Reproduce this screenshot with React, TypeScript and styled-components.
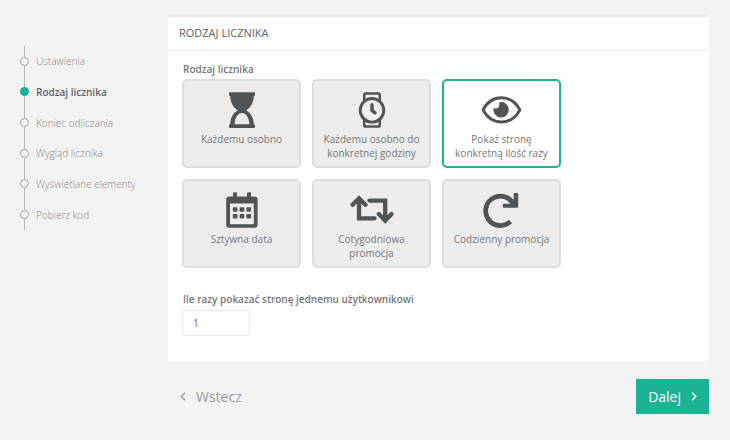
import React, { useState } from "react";
import styled, { createGlobalStyle } from "styled-components";

const GlobalStyle = createGlobalStyle`
  *, *::before, *::after { box-sizing: border-box; }
  body {
    margin: 0;
    background: #f3f3f4;
    color: #747678;
    font-family: "Open Sans", "Noto Sans", sans-serif;
    font-size: 10px;
    line-height: 14px;
  }
  button, input { font-family: inherit; }
`;

const Page = styled.div`
  display: grid;
  grid-template-columns: 168px minmax(0, 1fr);
  min-height: 100vh;
  padding: 15px 21px 0 0;
`;

const Sidebar = styled.nav`
  padding: 31px 0 0 20px;
`;

const Steps = styled.ol`
  position: relative;
  display: grid;
  grid-auto-rows: 1fr;
  height: 184px;
  margin: 0;
  padding: 0;
  list-style: none;

  &::before {
    content: "";
    position: absolute;
    top: 0;
    bottom: 0;
    left: 4px;
    width: 1px;
    background: #b8b9ba;
  }
`;

const StepItem = styled.li`
  position: relative;
  display: flex;
`;

const StepLink = styled.a<{ $active: boolean }>`
  display: flex;
  align-items: center;
  gap: 7px;
  color: ${(p) => (p.$active ? "#5f6264" : "#868889")};
  font-weight: ${(p) => (p.$active ? 600 : 300)};
  text-decoration: none;
  white-space: nowrap;
`;

const Dot = styled.span<{ $active: boolean }>`
  flex: none;
  width: 9px;
  height: 9px;
  border: ${(p) => (p.$active ? "none" : "1px solid #a3a4a5")};
  border-radius: 50%;
  background: ${(p) => (p.$active ? "#1ab394" : "#f3f3f4")};
`;

const Panel = styled.section`
  border-top: 2px solid #e7e8e9;
  background: #fff;
`;

const PanelTitle = styled.h1`
  margin: 0;
  padding: 9px 11px 10px;
  border-bottom: 1px solid #eeeff0;
  color: #5f6264;
  font-size: 11px;
  font-weight: 500;
  line-height: 14px;
`;

const PanelBody = styled.div`
  padding: 11px 14px 25px;
`;

const Group = styled.fieldset`
  min-width: 0;
  margin: 0;
  padding: 0;
  border: 0;
`;

const Legend = styled.legend`
  padding: 0 1px;
  margin-bottom: 3px;
  font-weight: 600;
`;

const Options = styled.div`
  display: grid;
  grid-template-columns: repeat(3, 119px);
  gap: 11px;
`;

const HiddenRadio = styled.input`
  position: absolute;
  inset: 0;
  margin: 0;
  opacity: 0;
  cursor: pointer;
`;

const OptionCard = styled.label`
  position: relative;
  display: flex;
  flex-direction: column;
  align-items: center;
  gap: 4px;
  height: 89px;
  padding: 11px 4px 0;
  border: 2px solid #dededf;
  border-radius: 5px;
  background: #ededed;
  text-align: center;

  &:has(input:checked) {
    border-color: #1ab394;
    background: #fff;
  }
`;

const OptionText = styled.span`
  max-width: 100px;
`;

const Glyph = styled.svg`
  flex: none;
  width: 44px;
  height: 36px;
  fill: none;
  stroke: #505457;
  stroke-linejoin: round;
  stroke-linecap: round;
`;

const Field = styled.div`
  display: flex;
  flex-direction: column;
  align-items: flex-start;
  gap: 4px;
  margin-top: 24px;
`;

const FieldLabel = styled.label`
  padding: 0 1px;
  font-weight: 600;
`;

const NumberInput = styled.input`
  width: 68px;
  height: 26px;
  padding: 0 10px;
  border: 1px solid #e9eaeb;
  border-radius: 1px;
  background: #fff;
  color: #676a6c;
  font-size: 10px;
`;

const Footer = styled.footer`
  display: flex;
  align-items: center;
  justify-content: space-between;
  margin-top: 18px;
`;

const NavButton = styled.button<{ $primary?: boolean }>`
  display: flex;
  align-items: center;
  gap: 10px;
  height: 35px;
  padding: 0 12px;
  border: 0;
  background: ${(p) => (p.$primary ? "#1ab394" : "transparent")};
  color: ${(p) => (p.$primary ? "#fff" : "#999b9c")};
  font-size: 14px;
  line-height: 20px;
  cursor: pointer;
`;

const Chevron = styled.svg`
  width: 6px;
  height: 9px;
  fill: none;
  stroke: currentColor;
  stroke-width: 1.4;
`;

const ink = "#505457";

const HourglassIcon = () => (
  <Glyph viewBox="0 0 44 36" aria-hidden="true">
    <path
      stroke="none"
      fill={ink}
      fillRule="evenodd"
      d="M9.8 0.3H34.2Q35 0.3 35 1.1V3.2Q35 4 34.2 4H33.8C33.6 10.5 31 15.3 26.3 18.2C31 21 33.6 25.8 33.8 32.2H34.2Q35 32.2 35 33V35.1Q35 35.9 34.2 35.9H9.8Q9 35.9 9 35.1V33Q9 32.2 9.8 32.2H10.2C10.4 25.8 13 21 17.7 18.2C13 15.3 10.4 10.5 10.2 4H9.8Q9 4 9 3.2V1.1Q9 0.3 9.8 0.3ZM14.6 32.2H29.4C29 25.5 26 21 22 21C18 21 15 25.5 14.6 32.2Z"
    />
  </Glyph>
);

const WatchIcon = () => (
  <Glyph viewBox="0 0 44 36" aria-hidden="true">
    <path
      strokeWidth="2.5"
      d="M14.2 8.4V3.2Q14.2 1.6 15.8 1.6H28.2Q29.8 1.6 29.8 3.2V8.4M14.2 28.2V33Q14.2 34.6 15.8 34.6H28.2Q29.8 34.6 29.8 33V28.2"
    />
    <circle cx="22" cy="18.3" r="11.8" strokeWidth="2.9" fill="#f0f0f0" />
    <path strokeWidth="3.4" d="M22 12.6V18.4L25 20.9" />
  </Glyph>
);

const EyeIcon = () => (
  <Glyph viewBox="0 0 44 36" aria-hidden="true">
    <path
      strokeWidth="3"
      d="M3.1 17.9C7.1 10.2 13.5 5.8 21.5 5.8S35.9 10.2 39.9 17.9C35.9 25.5 29.5 30 21.5 30S7.1 25.5 3.1 17.9Z"
    />
    <path
      stroke="none"
      fill={ink}
      d="M19.2 10.3A7.7 7.7 0 1 1 13.7 15.8Q15 16.6 16.5 16.4Q18.9 16 19.3 13.6Q19.5 11.8 19.2 10.3Z"
    />
  </Glyph>
);

const CalendarIcon = () => (
  <Glyph viewBox="0 0 44 36" aria-hidden="true">
    <path
      stroke="none"
      fill={ink}
      fillRule="evenodd"
      d="M9.2 4.4H13V1.3Q13 0.3 14 0.3H16Q17 0.3 17 1.3V4.4H27V1.3Q27 0.3 28 0.3H30Q31 0.3 31 1.3V4.4H34.4Q37.6 4.4 37.6 7.6V32.6Q37.6 35.8 34.4 35.8H9.2Q6.2 35.8 6.2 32.6V7.6Q6.2 4.4 9.2 4.4ZM10 11.4V32.2H33.8V11.4Z"
    />
    <g stroke="none" fill={ink}>
      {[12.8, 19.6, 26.4].map((x) => (
        <React.Fragment key={x}>
          <rect x={x} y="15.2" width="4.7" height="4.6" rx="0.8" />
          <rect x={x} y="22" width="4.7" height="4.6" rx="0.8" />
        </React.Fragment>
      ))}
    </g>
  </Glyph>
);

const RepeatIcon = () => (
  <Glyph viewBox="0 0 44 36" aria-hidden="true" strokeWidth="4.3">
    <path strokeLinejoin="miter" d="M2.6 12.7L9 6.2L15.4 12.7M9 7V26.3H24.6" />
    <path strokeLinejoin="miter" d="M19.4 8.6H35.2V28M28.8 22L35.2 28.6L41.5 22" />
  </Glyph>
);

const RotateIcon = () => (
  <Glyph viewBox="0 0 44 36" aria-hidden="true">
    <path strokeWidth="4.8" strokeLinecap="butt" d="M34 13.4A14.7 14.7 0 1 0 30.4 29.6" />
    <path
      stroke="none"
      fill={ink}
      d="M34.4 1H37.4Q38.2 1 38.2 1.8V15Q38.2 15.8 37.4 15.8H23.6Q22.8 15.8 22.8 15V12.6Q22.8 11.8 23.6 11.8H33.6V1.8Q33.6 1 34.4 1Z"
    />
  </Glyph>
);

const steps = [
  "Ustawienia",
  "Rodzaj licznika",
  "Koniec odliczania",
  "Wygląd licznika",
  "Wyświetlane elementy",
  "Pobierz kod",
];

const options = [
  { id: "each", text: "Każdemu osobno", Icon: HourglassIcon },
  { id: "each-hour", text: "Każdemu osobno do konkretnej godziny", Icon: WatchIcon },
  { id: "views", text: "Pokaż stronę konkretną ilość razy", Icon: EyeIcon },
  { id: "date", text: "Sztywna data", Icon: CalendarIcon },
  { id: "weekly", text: "Cotygodniowa promocja", Icon: RepeatIcon },
  { id: "daily", text: "Codzienny promocja", Icon: RotateIcon },
];

export default function App() {
  const [kind, setKind] = useState("views");
  const [count, setCount] = useState("1");
  const current = 1;

  return (
    <>
      <GlobalStyle />
      <Page>
        <Sidebar>
          <Steps>
            {steps.map((step, i) => (
              <StepItem key={step}>
                <StepLink
                  href={`#step-${i + 1}`}
                  $active={i === current}
                  aria-current={i === current ? "step" : undefined}
                >
                  <Dot $active={i === current} />
                  {step}
                </StepLink>
              </StepItem>
            ))}
          </Steps>
        </Sidebar>
        <main>
          <Panel>
            <PanelTitle>RODZAJ LICZNIKA</PanelTitle>
            <PanelBody>
              <Group>
                <Legend>Rodzaj licznika</Legend>
                <Options>
                  {options.map(({ id, text, Icon }) => (
                    <OptionCard key={id}>
                      <HiddenRadio
                        type="radio"
                        name="kind"
                        value={id}
                        checked={kind === id}
                        onChange={() => setKind(id)}
                      />
                      <Icon />
                      <OptionText>{text}</OptionText>
                    </OptionCard>
                  ))}
                </Options>
              </Group>
              <Field>
                <FieldLabel htmlFor="count">Ile razy pokazać stronę jednemu użytkownikowi</FieldLabel>
                <NumberInput
                  id="count"
                  type="text"
                  inputMode="numeric"
                  value={count}
                  onChange={(e) => setCount(e.target.value)}
                />
              </Field>
            </PanelBody>
          </Panel>
          <Footer>
            <NavButton type="button">
              <Chevron viewBox="0 0 6 9" aria-hidden="true">
                <path d="M5 0.8L1.2 4.5L5 8.2" />
              </Chevron>
              Wstecz
            </NavButton>
            <NavButton type="button" $primary>
              Dalej
              <Chevron viewBox="0 0 6 9" aria-hidden="true">
                <path d="M1 0.8L4.8 4.5L1 8.2" />
              </Chevron>
            </NavButton>
          </Footer>
        </main>
      </Page>
    </>
  );
}
